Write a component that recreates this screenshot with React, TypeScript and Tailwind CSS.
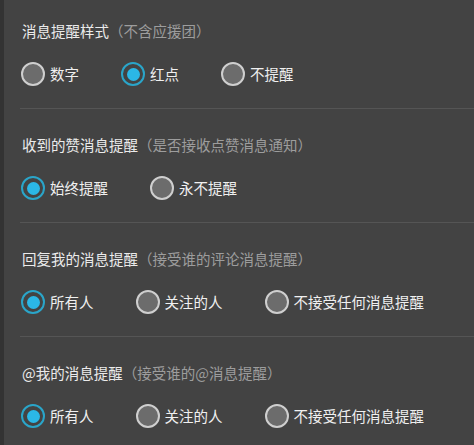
import { useState } from 'react';

type Section = {
  title: string;
  hint: string;
  options: string[];
  defaultValue: number;
};

const sections: Section[] = [
  { title: '消息提醒样式', hint: '（不含应援团）', options: ['数字', '红点', '不提醒'], defaultValue: 1 },
  { title: '收到的赞消息提醒', hint: '（是否接收点赞消息通知）', options: ['始终提醒', '永不提醒'], defaultValue: 0 },
  { title: '回复我的消息提醒', hint: '（接受谁的评论消息提醒）', options: ['所有人', '关注的人', '不接受任何消息提醒'], defaultValue: 0 },
  { title: '@我的消息提醒', hint: '（接受谁的@消息提醒）', options: ['所有人', '关注的人', '不接受任何消息提醒'], defaultValue: 0 },
];

function Radio({ checked }: { checked: boolean }) {
  if (checked) {
    return (
      <span className="w-6 h-6 shrink-0 rounded-full border-2 border-[#2aa5c9] flex items-center justify-center">
        <span className="w-[13px] h-[13px] rounded-full bg-[#2bb7e6]"></span>
      </span>
    );
  }
  return <span className="w-6 h-6 shrink-0 rounded-full border-2 border-[#cfcfcf] bg-[#6c6c6c]"></span>;
}

function SettingGroup({ section, last }: { section: Section; last: boolean }) {
  const [value, setValue] = useState(section.defaultValue);

  return (
    <div className={last ? 'ml-4 pt-[26px]' : 'ml-4 pt-[26px] pb-[22px] border-b border-[#555555]'}>
      <div className="pl-[2px] h-5 leading-5 text-[14.5px] text-[#ebebeb] whitespace-nowrap">
        {section.title}
        <span className="text-[#9d9d9d]">{section.hint}</span>
      </div>
      <div className="mt-[21px] pl-px flex items-center gap-[42px]">
        {section.options.map((opt, i) => (
          <button
            key={opt}
            type="button"
            onClick={() => setValue(i)}
            className="flex items-center gap-[5px] h-6"
          >
            <Radio checked={value === i} />
            <span className="text-[14.5px] leading-5 text-[#f0f0f0] whitespace-nowrap">{opt}</span>
          </button>
        ))}
      </div>
    </div>
  );
}

export default function App() {
  return (
    <div
      className="w-[474px] h-[445px] overflow-hidden bg-[#434343] border-l-4 border-[#333333]"
      style={{ fontFamily: '"Noto Sans CJK SC", "Noto Sans", sans-serif' }}
    >
      <div className="-mt-[5px]">
        {sections.map((s, i) => (
          <SettingGroup key={s.title} section={s} last={i === sections.length - 1} />
        ))}
      </div>
    </div>
  );
}
